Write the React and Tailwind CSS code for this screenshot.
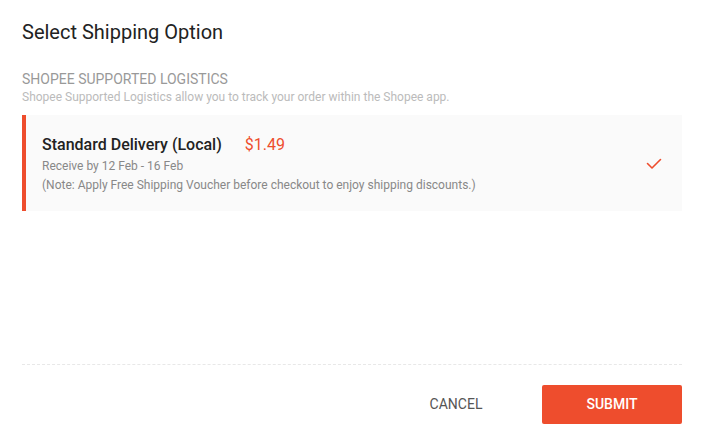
export default function App() {
  return (
    <div className="h-[436px] w-[702px] bg-white font-['Roboto',sans-serif] flex flex-col">
      <div className="pl-[22px] pr-[20px] pt-[19px]">
        <h2 className="text-[20px] leading-[26px] text-[#222]">Select Shipping Option</h2>
        <div className="mt-[25px] text-[14px] leading-[18px] uppercase text-[#999]">Shopee Supported Logistics</div>
        <div className="mt-[2px] text-[12px] leading-[15px] text-[#bbb]">
          Shopee Supported Logistics allow you to track your order within the Shopee app.
        </div>
        <div className="mt-[10px] flex h-[96px] items-center border-l-[4px] border-[#ee4d2d] bg-[#fafafa] pl-[16px] pr-[20px]">
          <div className="flex-1 pt-[3px]">
            <div className="flex items-center text-[16px] leading-[20px]">
              <span className="font-medium text-[#222]">Standard Delivery (Local)</span>
              <span className="ml-[23px] text-[#ee4d2d]">$1.49</span>
            </div>
            <div className="mt-[3px] text-[12px] leading-[17px] text-[#888]">Receive by 12 Feb - 16 Feb</div>
            <div className="mt-[2px] text-[12px] leading-[17px] text-[#888]">
              (Note: Apply Free Shipping Voucher before checkout to enjoy shipping discounts.)
            </div>
          </div>
          <svg width="16" height="12" viewBox="0 0 16 12" className="mt-[2px]">
            <path d="M1.5 5.5 L6 10 L14.5 1.5" fill="none" stroke="#ee4d2d" strokeWidth="1.6" strokeLinecap="round" strokeLinejoin="round" />
          </svg>
        </div>
      </div>
      <div className="flex-1" />
      <div className="ml-[22px] mr-[20px] border-t border-dashed border-[#e8e8e8]" />
      <div className="flex items-center justify-end px-[20px] pt-[20px] pb-[12px]">
        <button className="mr-[32px] h-[39px] w-[108px] text-[14px] uppercase text-[#555]">Cancel</button>
        <button className="h-[39px] w-[140px] rounded-[2px] bg-[#ee4d2d] text-[14px] font-medium uppercase text-white">
          Submit
        </button>
      </div>
    </div>
  );
}
